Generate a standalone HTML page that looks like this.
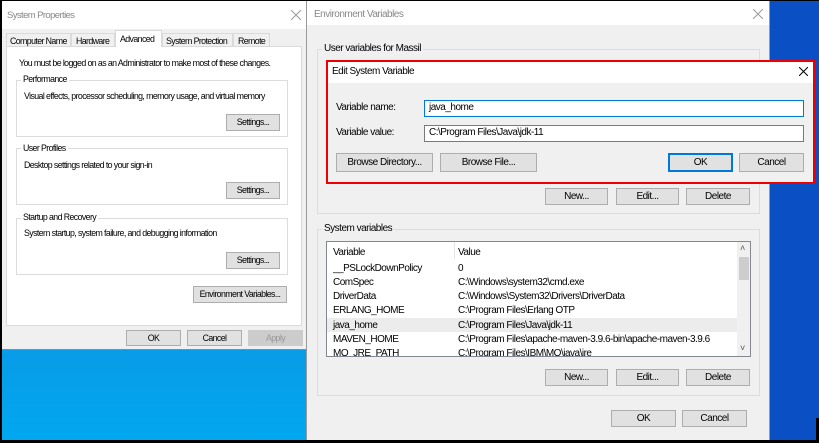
<!DOCTYPE html>
<html><head><meta charset="utf-8"><style>
*{box-sizing:border-box;margin:0;padding:0}
body{width:819px;height:443px;position:relative;overflow:hidden;background:#0b4fc4;font-family:"Liberation Sans",sans-serif;font-size:10px;letter-spacing:-0.5px;color:#000}
.a{position:absolute}
.btn{position:absolute;background:#e1e1e1;border:1px solid #adadad;text-align:center;line-height:15px;font-size:10px;white-space:nowrap}
.t{position:absolute;white-space:nowrap;font-size:10px}
.grp{position:absolute;border:1px solid #dcdcdc}
.lbl{position:absolute;white-space:nowrap;font-size:10px;padding:0 2px}
svg.x{position:absolute}
.L .t,.L .lbl,.L .btn{font-size:8.8px;letter-spacing:-0.6px}
</style></head><body>
<div class="a" style="left:0;top:340px;width:310px;height:103px;background:linear-gradient(#0a9ae6,#00a8f0)"></div>
<div class="L">
<div class="a" style="left:0;top:0;width:307px;height:350px;background:#f0f0f0;border:1px solid #8a8a8a"></div>
<div class="a" style="left:1px;top:1px;width:305px;height:28px;background:#fff"></div>
<div class="t" style="left:7px;top:10px;color:#888;font-size:9.5px">System Properties</div>
<svg class="x" style="left:291px;top:10px" width="10" height="10"><path d="M0 0L10 10M10 0L0 10" stroke="#999" stroke-width="1"/></svg>
<div class="a" style="left:6px;top:46px;width:296px;height:280px;background:#fff;border:1px solid #dadada"></div>
<div class="a" style="left:6px;top:33px;width:65px;height:14px;border:1px solid #dadada;border-bottom:none"></div><div class="t" style="left:10px;top:36px">Computer Name</div>
<div class="a" style="left:71px;top:33px;width:44px;height:14px;border:1px solid #dadada;border-bottom:none"></div><div class="t" style="left:76px;top:36px">Hardware</div>
<div class="a" style="left:115px;top:30px;width:47px;height:17px;background:#fff;border:1px solid #dadada;border-bottom:none"></div><div class="t" style="left:120px;top:34px">Advanced</div>
<div class="a" style="left:162px;top:33px;width:71px;height:14px;border:1px solid #dadada;border-bottom:none"></div><div class="t" style="left:166px;top:36px">System Protection</div>
<div class="a" style="left:233px;top:33px;width:37px;height:14px;border:1px solid #dadada;border-bottom:none"></div><div class="t" style="left:238px;top:36px">Remote</div>
<div class="t" style="left:19px;top:58px">You must be logged on as an Administrator to make most of these changes.</div>
<div class="grp" style="left:16px;top:80px;width:272px;height:57px"></div><div class="lbl" style="left:21px;top:74px;background:#fff">Performance</div>
<div class="t" style="left:24px;top:91px">Visual effects, processor scheduling, memory usage, and virtual memory</div>
<div class="btn" style="left:226px;top:114px;width:54px;height:17px">Settings...</div>
<div class="grp" style="left:16px;top:148px;width:272px;height:57px"></div><div class="lbl" style="left:21px;top:143px;background:#fff">User Profiles</div>
<div class="t" style="left:24px;top:160px">Desktop settings related to your sign-in</div>
<div class="btn" style="left:226px;top:182px;width:54px;height:17px">Settings...</div>
<div class="grp" style="left:16px;top:218px;width:272px;height:57px"></div><div class="lbl" style="left:21px;top:212px;background:#fff">Startup and Recovery</div>
<div class="t" style="left:24px;top:228px">System startup, system failure, and debugging information</div>
<div class="btn" style="left:226px;top:252px;width:54px;height:17px">Settings...</div>
<div class="btn" style="left:193px;top:286px;width:94px;height:17px">Environment Variables...</div>
<div class="btn" style="left:126px;top:330px;width:55px;height:16px">OK</div>
<div class="btn" style="left:187px;top:330px;width:55px;height:16px">Cancel</div>
<div class="btn" style="left:248px;top:330px;width:55px;height:16px;color:#999;background:#ccc;border-color:#ccc">Apply</div>
</div>
<!-- env variables -->
<div class="a" style="left:306px;top:0;width:464px;height:441px;background:#f0f0f0;border:1px solid #9a9a9a"></div>
<div class="a" style="left:307px;top:1px;width:462px;height:24px;background:#fff"></div>
<div class="t" style="left:314px;top:9px;color:#888">Environment Variables</div>
<svg class="x" style="left:753px;top:9px" width="10" height="10"><path d="M0 0L10 10M10 0L0 10" stroke="#999" stroke-width="1"/></svg>
<div class="grp" style="left:317px;top:49px;width:443px;height:165px"></div><div class="lbl" style="left:322px;top:43px;background:#f0f0f0">User variables for Massil</div>
<div class="btn" style="left:545px;top:188px;width:63px;height:17px">New...</div>
<div class="btn" style="left:616px;top:188px;width:63px;height:17px">Edit...</div>
<div class="btn" style="left:686px;top:188px;width:64px;height:17px">Delete</div>
<div class="grp" style="left:317px;top:229px;width:443px;height:167px"></div><div class="lbl" style="left:322px;top:223px;background:#f0f0f0">System variables</div>
<div class="a" style="left:326px;top:241px;width:425px;height:116px;background:#fff;border:1px solid #828790;overflow:hidden">
<div class="a" style="left:127px;top:0;width:1px;height:17px;background:#e5e5e5"></div>
<div class="a" style="left:0;top:76px;width:410px;height:14px;background:#ececec"></div>
<div class="a" style="left:410px;top:0;width:14px;height:115px;background:#f0f0f0"></div>
<div class="a" style="left:412px;top:15px;width:10px;height:23px;background:#cdcdcd"></div>
<div class="t" style="left:413px;top:1px;color:#555;font-size:9px">˄</div>
<div class="t" style="left:413px;top:101px;color:#555;font-size:9px">˅</div>
<div class="t" style="left:6px;top:5px">Variable</div><div class="t" style="left:131px;top:5px">Value</div>
<div class="t" style="left:6px;top:21px">__PSLockDownPolicy</div><div class="t" style="left:131px;top:21px">0</div>
<div class="t" style="left:6px;top:35px">ComSpec</div><div class="t" style="left:131px;top:35px">C:\Windows\system32\cmd.exe</div>
<div class="t" style="left:6px;top:49px">DriverData</div><div class="t" style="left:131px;top:49px">C:\Windows\System32\Drivers\DriverData</div>
<div class="t" style="left:6px;top:63px">ERLANG_HOME</div><div class="t" style="left:131px;top:63px">C:\Program Files\Erlang OTP</div>
<div class="t" style="left:6px;top:78px">java_home</div><div class="t" style="left:131px;top:78px">C:\Program Files\Java\jdk-11</div>
<div class="t" style="left:6px;top:92px">MAVEN_HOME</div><div class="t" style="left:131px;top:92px">C:\Program Files\apache-maven-3.9.6-bin\apache-maven-3.9.6</div>
<div class="t" style="left:6px;top:106px">MQ_JRE_PATH</div><div class="t" style="left:131px;top:106px">C:\Program Files\IBM\MQ\java\jre</div>
</div>
<div class="btn" style="left:545px;top:369px;width:63px;height:17px">New...</div>
<div class="btn" style="left:616px;top:369px;width:63px;height:17px">Edit...</div>
<div class="btn" style="left:686px;top:369px;width:64px;height:17px">Delete</div>
<div class="btn" style="left:611px;top:410px;width:65px;height:17px">OK</div>
<div class="btn" style="left:682px;top:410px;width:65px;height:17px">Cancel</div>
<!-- edit dialog -->
<div class="a" style="left:326px;top:60px;width:489px;height:124px;background:#f0f0f0;border:2px solid #e00"></div>
<div class="a" style="left:328px;top:62px;width:485px;height:21px;background:#fff"></div>
<div class="t" style="left:332px;top:66px">Edit System Variable</div>
<svg class="x" style="left:799px;top:67px" width="9" height="9"><path d="M0 0L9 9M9 0L0 9" stroke="#000" stroke-width="1"/></svg>
<div class="t" style="left:336px;top:102px">Variable name:</div>
<div class="a" style="left:424px;top:100px;width:380px;height:17px;background:#fff;border:1px solid #0078d7"></div>
<div class="t" style="left:429px;top:102px">java_home</div>
<div class="t" style="left:336px;top:127px">Variable value:</div>
<div class="a" style="left:424px;top:125px;width:380px;height:17px;background:#fff;border:1px solid #7a7a7a"></div>
<div class="t" style="left:429px;top:127px">C:\Program Files\Java\jdk-11</div>
<div class="btn" style="left:336px;top:153px;width:97px;height:19px;line-height:17px">Browse Directory...</div>
<div class="btn" style="left:440px;top:153px;width:97px;height:19px;line-height:17px">Browse File...</div>
<div class="btn" style="left:668px;top:153px;width:65px;height:19px;border:2px solid #0078d7;line-height:15px">OK</div>
<div class="btn" style="left:739px;top:153px;width:65px;height:19px;line-height:17px">Cancel</div>
<!-- black frame -->
<div class="a" style="left:0;top:0;width:2px;height:443px;background:#000"></div>
<div class="a" style="left:0;top:440px;width:819px;height:3px;background:#000"></div>
<div class="a" style="left:0;top:0;width:819px;height:1px;background:#000"></div>
<div class="a" style="left:816px;top:418px;width:3px;height:25px;background:#000"></div>
</body></html>
